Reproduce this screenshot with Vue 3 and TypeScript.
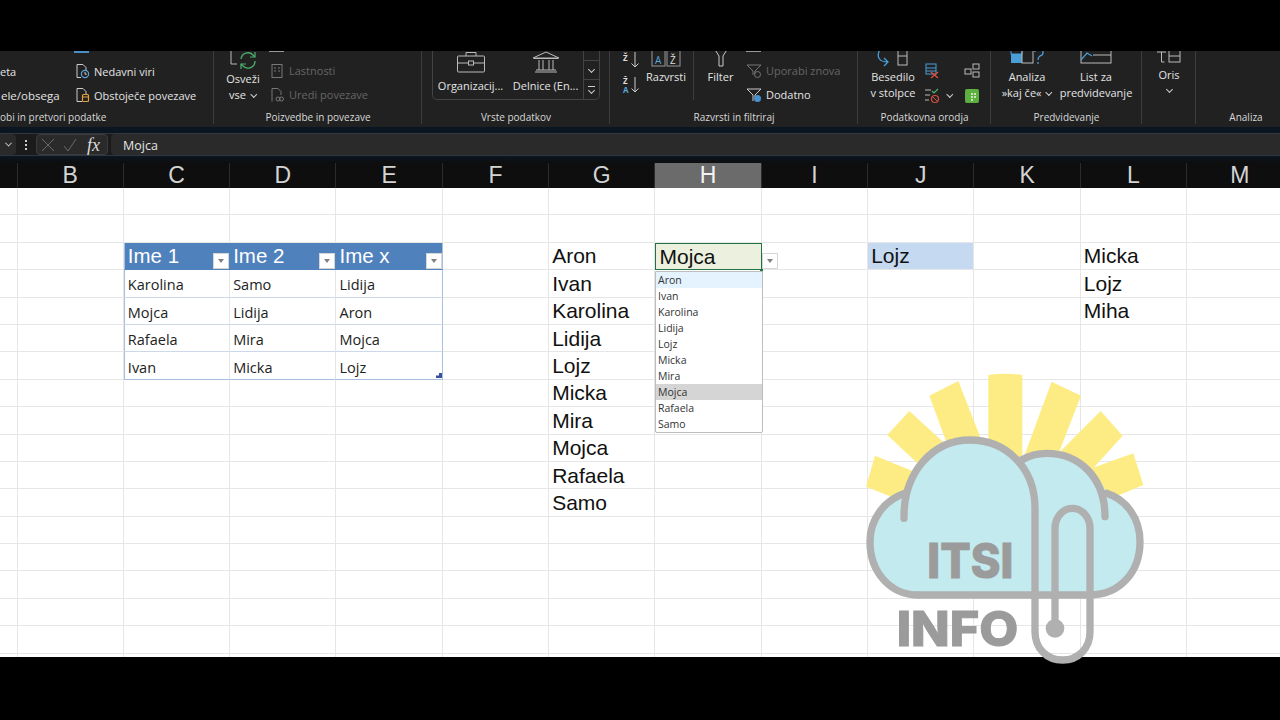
<script setup lang="ts">
import { computed } from 'vue'

const letters = ['B', 'C', 'D', 'E', 'F', 'G', 'H', 'I', 'J', 'K', 'L', 'M']

// sheet content, keyed by "row:col" (col 0 is the cut off A)
const sorted = ['Aron', 'Ivan', 'Karolina', 'Lidija', 'Lojz', 'Micka', 'Mira', 'Mojca', 'Rafaela', 'Samo']
const table = [
  ['Karolina', 'Samo', 'Lidija'],
  ['Mojca', 'Lidija', 'Aron'],
  ['Rafaela', 'Mira', 'Mojca'],
  ['Ivan', 'Micka', 'Lojz']
]
const heads = ['Ime 1', 'Ime 2', 'Ime x']
const right = ['Micka', 'Lojz', 'Miha']

interface Cell { key: string; text: string; cls: string; filter: boolean }

const cells = computed<Cell[]>(() => {
  const out: Cell[] = []
  for (let r = 0; r < 18; r++) {
    for (let c = 0; c < 13; c++) {
      let text = ''
      let cls = ''
      let filter = false
      if (c >= 2 && c <= 4 && r === 2) {
        text = heads[c - 2]
        cls = 'thead'
        filter = true
      } else if (c >= 2 && c <= 4 && r >= 3 && r <= 6) {
        text = table[r - 3][c - 2]
        cls = 'tcell'
        if (r === 6) cls += ' tlast'
      }
      if (c === 2 && r >= 2 && r <= 6) cls += ' tleft'
      if (c === 4 && r >= 2 && r <= 6) cls += ' tright'
      if (c === 6 && r >= 2 && r < 12) {
        text = sorted[r - 2]
        cls = 'big'
      }
      if (c === 7 && r === 2) {
        text = 'Mojca'
        cls = 'big active'
      }
      if (c === 9 && r === 2) {
        text = 'Lojz'
        cls = 'big marked'
      }
      if (c === 11 && r >= 2 && r <= 4) {
        text = right[r - 2]
        cls = 'big'
      }
      out.push({ key: r + ':' + c, text, cls, filter })
    }
  }
  return out
})
</script>

<template>
  <div class="page">
    <div class="topbar"></div>

    <div class="ribbon">
      <!-- Pridobi in pretvori podatke -->
      <section class="group g1">
        <div class="body first">
          <div class="stack cut-left">
            <span class="stub"></span>
            <span class="row">eta</span>
            <span class="row pull">ele/obsega</span>
          </div>
          <div class="stack">
            <span class="stub blue-stub"></span>
            <span class="row">
              <svg class="ic" viewBox="0 0 16 16"><path d="M3 1.500h6l3 3V8M3 1.500v13h4" fill="none" stroke="#ccc" /><circle cx="11" cy="11" r="3.600" fill="none" stroke="#5aa7dc" stroke-width="1.200" /><path d="M11 9v2.200h1.800" fill="none" stroke="#ccc" /></svg>
              Nedavni viri
            </span>
            <span class="row">
              <svg class="ic" viewBox="0 0 16 16"><path d="M3 1.500h6l3 3V7M3 1.500v13h5" fill="none" stroke="#ccc" /><rect x="8.500" y="7.500" width="6" height="7" rx="1" fill="none" stroke="#e2a33d" stroke-width="1.200" /><path d="M8.500 10h6" stroke="#e2a33d" /></svg>
              Obstoječe povezave
            </span>
          </div>
        </div>
        <div class="label left">obi in pretvori podatke</div>
      </section>

      <!-- Poizvedbe in povezave -->
      <section class="group g2">
        <div class="body second">
          <div class="big-btn refresh">
            <svg class="ic-refresh" viewBox="0 0 34 20"><path d="M5 -2v15h6" fill="none" stroke="#bbb" /><path d="M15 8a7 7 0 0 1 12-4l2 2M29 10a7 7 0 0 1-12 5l-2-2" fill="none" stroke="#4caf6e" stroke-width="1.300" /><path d="M29 1v5h-5M15 18v-5h5" fill="none" stroke="#4caf6e" stroke-width="1.200" /></svg>
            <span>Osveži</span>
            <span>vse <i class="chev"></i></span>
          </div>
          <div class="stack dim">
            <span class="stub"></span>
            <span class="row">
              <svg class="ic" viewBox="0 0 16 16"><rect x="3" y="1.500" width="10" height="13" fill="none" stroke="#777" /><path d="M5 5h2M9 5h2M5 8h2M9 8h2" stroke="#777" /></svg>
              Lastnosti
            </span>
            <span class="row">
              <svg class="ic" viewBox="0 0 16 16"><path d="M3 14.500v-13h6l3 3V8" fill="none" stroke="#777" /><circle cx="9" cy="12" r="2" fill="none" stroke="#777" /><circle cx="12.500" cy="12" r="2" fill="none" stroke="#777" /></svg>
              Uredi povezave
            </span>
          </div>
        </div>
        <div class="label">Poizvedbe in povezave</div>
      </section>

      <!-- Vrste podatkov -->
      <section class="group g3">
        <div class="body third">
          <div class="gallery">
            <div class="gal-item">
              <svg class="gal-ic" viewBox="0 0 30 22"><rect x="1.500" y="5" width="27" height="16" rx="1" fill="none" stroke="#bbb" /><path d="M10 5V1.500h10V5M1.500 12h11M17.500 12h11" fill="none" stroke="#bbb" /><rect x="12.500" y="10" width="5" height="4" fill="none" stroke="#bbb" /></svg>
              <span>Organizacij...</span>
            </div>
            <div class="gal-item">
              <svg class="gal-ic" viewBox="0 0 30 22"><path d="M2 7 15 1l13 6zM4 21h22M3 7.500h24M8 9v10M12 9v10M18 9v10M22 9v10M5 19h20" fill="none" stroke="#bbb" /></svg>
              <span>Delnice (En...</span>
            </div>
            <div class="gal-scroll">
              <span class="gal-btn"></span>
              <span class="gal-btn"><i class="chev"></i></span>
              <span class="gal-btn more"><i class="chev"></i></span>
            </div>
          </div>
        </div>
        <div class="label">Vrste podatkov</div>
      </section>

      <!-- Razvrsti in filtriraj -->
      <section class="group g4">
        <div class="body fourth">
          <div class="sort-col">
            <svg class="ic-sort" viewBox="0 0 18 18"><text x="1" y="9" class="az white">Ž</text><path d="M13 0v15M9.500 11.500 13 15l3.500-3.500" fill="none" stroke="#ccc" /></svg>
            <svg class="ic-sort" viewBox="0 0 18 18"><text x="1" y="8" class="az white">Ž</text><text x="1" y="17" class="az blue">A</text><path d="M13 1v15M9.500 12.500 13 16l3.500-3.500" fill="none" stroke="#ccc" /></svg>
          </div>
          <div class="big-btn sort">
            <svg class="ic-az" viewBox="0 0 30 16"><rect x="1" y="-4" width="13" height="19" fill="none" stroke="#999" /><rect x="16" y="-4" width="13" height="19" fill="none" stroke="#999" /><text x="4" y="13" class="az blue big-az">A</text><text x="19" y="13" class="az white big-az">Ž</text></svg>
            <span>Razvrsti</span>
          </div>
          <div class="big-btn filter">
            <svg class="ic-funnel" viewBox="0 0 16 16"><path d="M1 -3h14L10 5v10H6V5z" fill="none" stroke="#ccc" /></svg>
            <span>Filter</span>
          </div>
          <div class="stack dim">
            <span class="stub"></span>
            <span class="row">
              <svg class="ic" viewBox="0 0 16 16"><path d="M1 2h14L9 8v3M7 12V8L1 2" fill="none" stroke="#777" /><circle cx="11.500" cy="11.500" r="3" fill="none" stroke="#777" /></svg>
              Uporabi znova
            </span>
            <span class="row bright">
              <svg class="ic" viewBox="0 0 16 16"><path d="M1 2h14L9 8v2M7 14V8L1 2" fill="none" stroke="#ccc" /><circle cx="11.500" cy="11.500" r="3.500" fill="#4a90d0" /></svg>
              Dodatno
            </span>
          </div>
        </div>
        <div class="label">Razvrsti in filtriraj</div>
      </section>

      <!-- Podatkovna orodja -->
      <section class="group g5">
        <div class="body fifth">
          <div class="big-btn text-cols">
            <svg class="ic-lg" viewBox="0 0 34 16"><path d="M4 -2C0 6 3 11 12 11M8 7l4 4-4 4" fill="none" stroke="#4a9ed8" stroke-width="1.300" /><rect x="22" y="-2" width="9" height="16" fill="none" stroke="#bbb" /><path d="M22 5h9" stroke="#bbb" /></svg>
            <span>Besedilo</span>
            <span>v stolpce</span>
          </div>
          <div class="tools">
            <svg class="ic" viewBox="0 0 16 16"><rect x="2" y="1" width="10" height="10" fill="none" stroke="#4a9ed8" /><path d="M2 5h10M2 8h10" stroke="#4a9ed8" /><path d="M7 9l7 6M14 9l-7 6" stroke="#d8503c" stroke-width="1.400" /></svg>
            <span class="tool-row">
              <svg class="ic" viewBox="0 0 16 16"><path d="M1 2h6M1 7h5M1 12h4" stroke="#bbb" /><path d="M8 3l2 2 4-4" fill="none" stroke="#4caf6e" stroke-width="1.200" /><circle cx="11" cy="11" r="3.500" fill="none" stroke="#d8503c" stroke-width="1.200" /><path d="M8.500 8.500l5 5" stroke="#d8503c" /></svg>
              <i class="chev"></i>
            </span>
          </div>
          <div class="tools end">
            <svg class="ic" viewBox="0 0 16 16"><rect x="1" y="6" width="6" height="5" fill="none" stroke="#bbb" /><rect x="9" y="1" width="6" height="5" fill="none" stroke="#bbb" /><rect x="9" y="9" width="6" height="5" fill="none" stroke="#bbb" /></svg>
            <svg class="ic" viewBox="0 0 16 16"><rect x="1" y="1" width="14" height="14" rx="2" fill="#5db03f" /><path d="M7 6h2M10 6h2M7 9h2M10 9h2M7 12h2" stroke="#eaf5e0" stroke-width="1.300" /></svg>
          </div>
        </div>
        <div class="label">Podatkovna orodja</div>
      </section>

      <!-- Predvidevanje -->
      <section class="group g6">
        <div class="body sixth">
          <div class="big-btn whatif">
            <svg class="ic-lg" viewBox="0 0 34 14"><rect x="1" y="3" width="11" height="9" fill="#4a9ed8" /><rect x="1" y="-4" width="11" height="7" fill="none" stroke="#4a9ed8" /><rect x="12" y="-4" width="11" height="16" fill="none" stroke="#bbb" /><path d="M25 1a4 4 0 1 1 5 4c-2 1-2 3-2 4M28 11v2" fill="none" stroke="#4a9ed8" stroke-width="1.300" /></svg>
            <span>Analiza</span>
            <span>»kaj če« <i class="chev"></i></span>
          </div>
          <div class="big-btn forecast">
            <svg class="ic-lg" viewBox="0 0 34 14"><rect x="2" y="-3" width="30" height="15" fill="none" stroke="#bbb" /><path d="M2 9l6-7 5 3" fill="none" stroke="#4a9ed8" stroke-width="1.200" /><path d="M14 4h18" stroke="#bbb" /></svg>
            <span>List za</span>
            <span>predvidevanje</span>
          </div>
        </div>
        <div class="label">Predvidevanje</div>
      </section>

      <!-- Oris -->
      <section class="group g7">
        <div class="body seventh">
          <div class="big-btn outline">
            <svg class="ic-lg" viewBox="0 0 26 12"><path d="M1 1h9M5.500 1v10h3" fill="none" stroke="#bbb" /><rect x="13" y="-2" width="11" height="13" fill="none" stroke="#bbb" /><path d="M13 5h11" stroke="#bbb" /></svg>
            <span>Oris</span>
            <i class="chev solo"></i>
          </div>
        </div>
        <div class="label"></div>
      </section>

      <section class="group last">
        <div class="body"></div>
        <div class="label">Analiza</div>
      </section>
    </div>

    <div class="strip"></div>

    <div class="formula">
      <span class="namebox"><i class="chev"></i></span>
      <span class="dots"><i></i><i></i><i></i></span>
      <span class="fx-group">
        <svg class="fx-ic" viewBox="0 0 14 14"><path d="M1 1l12 12M13 1 1 13" stroke="#6a6a6a" /></svg>
        <svg class="fx-ic" viewBox="0 0 14 14"><path d="M1 8l4 5 8-12" fill="none" stroke="#6a6a6a" /></svg>
        <em>fx</em>
      </span>
      <span class="input">Mojca</span>
    </div>

    <div class="strip lower"></div>

    <div class="headers">
      <div class="corner"></div>
      <div v-for="l in letters" :key="l" class="colhead" :class="{ selected: l === 'H' }">{{ l }}</div>
    </div>

    <div class="sheet">
      <div v-for="c in cells" :key="c.key" class="cell" :class="c.cls">
        <span>{{ c.text }}</span>
        <span v-if="c.filter" class="filter-btn"><i></i></span>
      </div>
      <span class="resize"></span>
      <span class="handle"></span>
      <span class="dv-btn"><i></i></span>
      <div class="dv-list">
        <div v-for="n in sorted" :key="n" class="dv-item" :class="{ first: n === 'Aron', cur: n === 'Mojca' }">{{ n }}</div>
      </div>
    </div>

    <div class="bottombar"></div>

    <svg class="logo" viewBox="0 0 930 915">
      <g fill="#fdec83">
        <polygon points="75,272 230,335 200,425 48,365" />
        <polygon points="178,138 300,250 240,330 112,210" />
        <polygon points="325,48 238,92 300,260 400,240" />
        <path d="M415 30Q466 22 517 30V290H415z" />
        <polygon points="605,50 693,92 620,280 520,280" />
        <polygon points="752,138 818,212 720,320 630,260" />
        <polygon points="850,265 880,360 760,410 725,310" />
      </g>
      <path d="M205 690C120 690 60 620 60 530 60 460 105 405 165 385 195 290 270 225 360 225 425 225 480 250 515 285 540 270 565 265 590 265 680 265 745 320 770 385 830 405 870 460 870 530 870 620 810 690 720 690z" fill="#c3eaee" />
      <g fill="none" stroke="#b0b0b0" stroke-width="22" stroke-linecap="round">
        <path d="M205 690C120 690 60 620 60 530 60 460 105 405 165 385" />
        <path d="M162 460C160 320 250 225 360 225 470 225 555 310 555 430V800C555 850 590 885 638 885 685 885 720 850 720 800V490C720 455 695 430 667 430 640 430 615 455 615 490V790" />
        <path d="M515 285C540 270 565 265 590 265 690 265 765 340 765 455" />
        <path d="M770 385C830 405 870 460 870 530 870 620 810 690 720 690H205" />
      </g>
      <circle cx="615" cy="790" r="28" fill="#b0b0b0" />
      <text x="232" y="638" textLength="258" lengthAdjust="spacingAndGlyphs" class="logo-text">ITSI</text>
      <text x="140" y="842" textLength="365" lengthAdjust="spacingAndGlyphs" class="logo-text">INFO</text>
    </svg>
  </div>
</template>

<style>
html, body { margin: 0; background: #000; }
</style>

<style scoped>
.page {
  position: relative;
  width: 1280px;
  height: 720px;
  overflow: hidden;
  background: #000;
  display: flex;
  flex-direction: column;
  font-family: "Open Sans", "Noto Sans", sans-serif;
}
.topbar { height: 51px; flex: none; background: #000; }
.bottombar { flex: 1; background: #000; }

/* ribbon */
.ribbon {
  height: 76px;
  flex: none;
  display: flex;
  background: #212121;
  color: #e4e4e4;
  font-size: 11px;
  overflow: hidden;
}
.group {
  flex: none;
  display: flex;
  flex-direction: column;
  position: relative;
  height: 76px;
}
.group::after {
  content: "";
  position: absolute;
  right: 0;
  top: 0;
  bottom: 3px;
  width: 1px;
  background: #3d3d3d;
}
.g1 { width: 214px; }
.g2 { width: 208px; }
.g3 { width: 188px; }
.g4 { width: 248px; }
.g5 { width: 133px; }
.g6 { width: 151px; }
.g7 { width: 54px; }
.group.last { flex: 1; padding-left: 16px; }
.group.last::after { display: none; }
.body {
  height: 56px;
  flex: none;
  display: flex;
  overflow: hidden;
  box-sizing: border-box;
}
.label {
  height: 20px;
  flex: none;
  text-align: center;
  font-size: 10px;
  line-height: 20px;
  color: #d8d8d8;
  white-space: nowrap;
}
.label.left { text-align: left; }

.stack {
  display: flex;
  flex-direction: column;
}
.stub { height: 8px; flex: none; }
.dim .stub {
  width: 15px;
  height: 7.500px;
  border-top: 1.500px solid #999;
  box-sizing: border-box;
  background: none;
}
.blue-stub {
  width: 15px;
  height: 8px;
  border-top: 2px solid #4a8fc4;
  box-sizing: border-box;
}
.row {
  display: flex;
  align-items: center;
  gap: 4px;
  height: 25.500px;
  white-space: nowrap;
}
.row.pull { margin-left: 1px; font-size: 11.500px; }
.dim { color: #666; }
.bright { color: #e4e4e4; }
.ic { width: 16px; height: 16px; flex: none; }
.ic-lg { width: 30px; height: 16px; flex: none; }
.chev {
  display: inline-block;
  width: 4px;
  height: 4px;
  border-right: 1px solid #ccc;
  border-bottom: 1px solid #ccc;
  transform: rotate(45deg) translate(-2px, -1px);
  margin-left: 3px;
}
.big-btn {
  display: flex;
  flex-direction: column;
  align-items: center;
  line-height: 16px;
  white-space: nowrap;
}
.big-btn > span { display: block; }

.first { gap: 12px; }
.cut-left { width: 62px; }
.second { padding-left: 10px; }
.refresh { width: 38px; }
.ic-refresh { width: 34px; height: 20px; }
.second .stack { margin-left: 7px; }

.third { padding: 0 10px; }
.gallery {
  width: 168px;
  height: 48.500px;
  border: 1px solid #444;
  border-top: 0;
  border-radius: 0 0 5px 5px;
  display: flex;
  box-sizing: border-box;
}
.gal-item {
  width: 76px;
  display: flex;
  flex-direction: column;
  align-items: center;
  gap: 5px;
  white-space: nowrap;
}
.gal-ic { width: 30px; height: 22px; }
.gal-scroll {
  margin-left: auto;
  width: 15px;
  display: flex;
  flex-direction: column;
  border-left: 1px solid #444;
}
.gal-btn {
  height: 9px;
  border-bottom: 1px solid #444;
  display: flex;
  justify-content: center;
}
.gal-btn + .gal-btn { height: 19px; align-items: center; }
.gal-btn.more { border-bottom: 0; flex-direction: column; align-items: center; }
.gal-btn.more::before { content: ""; width: 7px; height: 1px; background: #ccc; margin-bottom: 1px; }
.gal-btn .chev { margin: 0; transform: rotate(45deg); }

.fourth { padding-left: 12px; }
.sort-col {
  width: 18px;
  display: flex;
  flex-direction: column;
  gap: 6px;
  margin-top: 1px;
}
.ic-sort { width: 18px; height: 18px; }
.az { font: 700 8px "Open Sans", sans-serif; }
.big-az { font-size: 10px; font-weight: 400; }
.white { fill: #ddd; }
.blue { fill: #5aa7dc; }
.sort { width: 54px; margin-left: -1px; }
.ic-az { width: 30px; height: 16px; margin-bottom: 2px; }
.filter {
  width: 54px;
  border-left: 1px solid #3d3d3d;
  height: 49px;
  box-sizing: border-box;
}
.ic-funnel { width: 16px; height: 16px; margin-bottom: 2px; }
.fourth .stack { margin-left: -1px; }

.fifth { padding-left: 16px; }
.text-cols { width: 38px; margin-right: 12px; }
.text-cols .ic-lg { width: 34px; height: 16px; margin-bottom: 2px; }
.tools {
  width: 40px;
  display: flex;
  flex-direction: column;
  padding-top: 12px;
  gap: 9px;
}
.tool-row { display: flex; align-items: center; gap: 5px; }
.tools.end { width: 16px; }

.sixth { padding-left: 16px; }
.whatif { width: 40px; }
.forecast { width: 80px; margin-left: 9px; }
.sixth .ic-lg { width: 34px; height: 14px; margin-bottom: 4px; }

.seventh { justify-content: center; }
.outline .ic-lg { width: 26px; height: 12px; margin-bottom: 4px; }
.chev.solo { margin: 4px 0 0; transform: rotate(45deg); }

/* formula bar */
.strip { height: 6px; flex: none; background: #0c1522; }
.strip.lower { height: 7px; background: linear-gradient(#0c1522, #0d0d0d); }
.formula {
  height: 23px;
  flex: none;
  display: flex;
  align-items: stretch;
  background: #1b1b1b;
  color: #e4e4e4;
  border-top: 1px solid #33373d;
  border-bottom: 1px solid #33373d;
  box-sizing: border-box;
}
.namebox {
  width: 16px;
  background: #2a2a2a;
  border-radius: 0 4px 4px 0;
  display: flex;
  align-items: center;
  justify-content: center;
}
.namebox .chev { margin: 0; transform: rotate(45deg) translate(-1px, -1px); }
.dots {
  width: 20px;
  display: flex;
  flex-direction: column;
  align-items: center;
  justify-content: center;
  gap: 2px;
}
.dots i { width: 2px; height: 2px; background: #ccc; }
.fx-group {
  width: 72px;
  box-sizing: border-box;
  background: #2a2a2a;
  border: 1px solid #3c3c3c;
  border-radius: 4px;
  display: flex;
  align-items: center;
  gap: 8px;
  padding-left: 4px;
}
.fx-ic { width: 14px; height: 14px; }
.fx-group em {
  font: italic 18px/18px "Liberation Serif", serif;
  color: #ddd;
  margin-left: 2px;
}
.input {
  flex: 1;
  margin-left: 3px;
  background: #2a2a2a;
  border-radius: 4px 0 0 4px;
  font-size: 12.500px;
  line-height: 23px;
  padding-left: 12px;
}

/* column headers */
.headers {
  height: 25px;
  flex: none;
  display: grid;
  grid-template-columns: 17.500px repeat(12, 106.33px);
  background: #0e0e0e;
  color: #d4d4d4;
  font: 23px/25px "Liberation Sans", sans-serif;
  text-align: center;
}
.colhead { border-right: 1px solid #2c2c2c; box-sizing: border-box; }
.corner { border-right: 1px solid #2c2c2c; }
.colhead.selected {
  background: #6b6b6b;
  color: #f2f2f2;
  border-bottom: 1px solid #2f8f5f;
}

/* sheet */
.sheet {
  position: relative;
  height: 469px;
  flex: none;
  overflow: hidden;
  background: #fff;
  display: grid;
  grid-template-columns: 17.500px repeat(12, 106.33px);
  grid-auto-rows: 27.400px;
  color: #111;
}
.cell {
  box-sizing: border-box;
  border-right: 1px solid #e6e6e6;
  border-bottom: 1px solid #e6e6e6;
  display: flex;
  align-items: center;
  padding-left: 3px;
  white-space: nowrap;
  overflow: hidden;
}
.big {
  font: 21px "Liberation Sans", sans-serif;
  padding-top: 1px;
}
.active {
  background: #ebf1de;
  border: 1.500px solid #217346;
}
.marked { background: #c5d9f1; }
.thead {
  background: #4f81bd;
  border-color: #4f81bd;
  color: #fff;
  font: 20.500px "Liberation Sans", sans-serif;
  padding-top: 1px;
}
.tcell {
  font-size: 14.500px;
  color: #222;
  padding-top: 3px;
  border-bottom-color: #cdd8ea;
  border-right-color: #e4e4e4;
}
.tlast { border-bottom-color: #a9bfdf; }
.tleft { border-left: 1px solid #a9bfdf; }
.tright { border-right: 1px solid #a9bfdf; }
.filter-btn {
  margin-left: auto;
  align-self: flex-end;
  width: 16px;
  height: 16px;
  flex: none;
  background: #fff;
  border: 1px solid #d6d6d6;
  box-sizing: border-box;
  display: flex;
  align-items: center;
  justify-content: center;
}
.filter-btn i, .dv-btn i {
  width: 0;
  height: 0;
  border: 3.500px solid transparent;
  border-top: 4px solid #808080;
  border-bottom: 0;
}
.resize {
  position: absolute;
  left: 436px;
  top: 185px;
  width: 6px;
  height: 5px;
  background: #3a4fa0;
  clip-path: polygon(100% 0, 100% 100%, 0 100%, 0 50%, 50% 50%, 50% 0);
}
.handle {
  position: absolute;
  left: 760px;
  top: 81px;
  width: 3px;
  height: 3px;
  background: #217346;
}
.dv-btn {
  position: absolute;
  left: 762px;
  top: 65px;
  width: 16px;
  height: 16px;
  box-sizing: border-box;
  background: #fff;
  border: 1px solid #d6d6d6;
  display: flex;
  align-items: center;
  justify-content: center;
}
.dv-list {
  position: absolute;
  left: 655px;
  top: 82.500px;
  width: 108px;
  box-sizing: border-box;
  background: #fff;
  border: 1px solid #bdbdbd;
  border-radius: 0 0 2px 2px;
  font-size: 10.500px;
  color: #333;
}
.dv-item {
  height: 16px;
  line-height: 16px;
  padding-left: 2px;
}
.dv-item.first { background: #e5f3ff; }
.dv-item.cur { background: #d5d5d5; }

/* logo stamped over the bottom right */
.logo {
  position: absolute;
  left: 850px;
  top: 365px;
  width: 310px;
  height: 305px;
}
.logo-text {
  font: 800 143px Inter, "Liberation Sans", sans-serif;
  fill: #9b9b9b;
  stroke: #9b9b9b;
  stroke-width: 3px;
}
</style>
